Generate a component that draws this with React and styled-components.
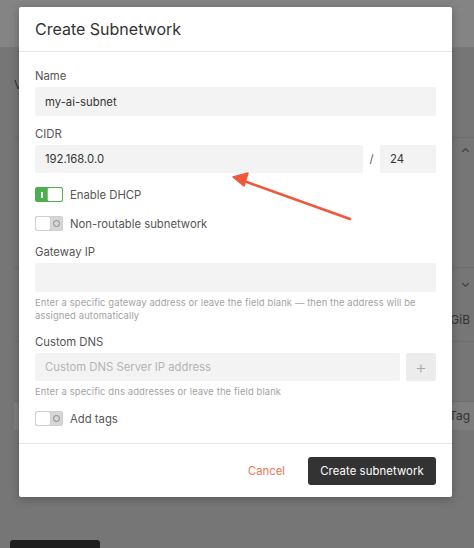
import React from "react";
import styled, { createGlobalStyle } from "styled-components";

const Global = createGlobalStyle`
  html, body { margin: 0; padding: 0; }
  body {
    width: 474px; height: 548px; overflow: hidden;
    background: #767676;
    font-family: Inter, "Noto Sans", "Liberation Sans", sans-serif;
  }
  * { box-sizing: border-box; }
`;

/* ---------- background page (behind the dim overlay) ---------- */
const Page = styled.div`
  position: relative;
  width: 474px;
  height: 548px;
  background: #767676;
  display: flex;
  flex-direction: column;
`;
const PageTop = styled.div`
  height: 48px;
  background: #848484;
  border-bottom: 1px solid #7a7a7a;
`;
const PageBody = styled.div`
  flex: 1;
  display: flex;
  flex-direction: column;
  padding: 28px 0 0 14px;
  color: #3a3a3a;
  font-size: 12px;
`;
const PageRow = styled.div`
  height: ${(p) => p.h}px;
  flex: none;
  display: flex;
  align-items: center;
  justify-content: space-between;
  background: ${(p) => (p.band ? "#7e7e7e" : "transparent")};
  border-bottom: 1px solid ${(p) => (p.line ? "#6f6f6f" : "transparent")};
  padding-right: 4px;
  font-size: 12px;
  color: #333;
`;
const PageButton = styled.div`
  margin-top: auto;
  margin-left: -4px;
  width: 90px;
  height: 8px;
  background: #1f1f1f;
  border-radius: 3px 3px 0 0;
`;

/* ---------- dialog ---------- */
const Backdrop = styled.div`
  position: absolute;
  inset: 0;
  padding: 7px 22px 0 19px;
`;
const Modal = styled.div`
  width: 433px;
  height: 490px;
  background: #fff;
  border-radius: 2px;
  box-shadow: 0 2px 10px rgba(0, 0, 0, 0.25);
  display: flex;
  flex-direction: column;
  position: relative;
`;
const Header = styled.div`
  height: 45px;
  flex: none;
  padding: 0 16px;
  display: flex;
  align-items: center;
  border-bottom: 1px solid #e6e6e6;
`;
const Title = styled.h2`
  margin: 0;
  font-size: 16px;
  font-weight: 400;
  color: #333;
`;
const Body = styled.div`
  flex: 1;
  padding: 16px 16px 0 16px;
  display: flex;
  flex-direction: column;
`;
const Field = styled.div`
  display: flex;
  flex-direction: column;
  margin-top: ${(p) => p.mt || 0}px;
`;
const Label = styled.label`
  font-size: 11.3px;
  line-height: 16px;
  color: #555;
  margin-bottom: 3px;
`;
const Input = styled.div`
  height: ${(p) => p.h || 29}px;
  flex: ${(p) => (p.grow ? "1 1 0" : "none")};
  width: ${(p) => (p.w ? `${p.w}px` : "auto")};
  background: #f4f3f3;
  border-radius: 2px;
  display: flex;
  align-items: center;
  padding-left: 10px;
  font-size: 11.3px;
  color: ${(p) => (p.placeholder ? "#b4b4b4" : "#333")};
`;
const InputRow = styled.div`
  display: flex;
  align-items: center;
  gap: ${(p) => p.gap || 0}px;
`;
const Slash = styled.span`
  width: 17px;
  text-align: center;
  font-size: 11.3px;
  color: #555;
`;
const PlusButton = styled.div`
  width: 30px;
  height: 28px;
  background: #ececec;
  border-radius: 2px;
  display: flex;
  align-items: center;
  justify-content: center;
  color: #aaa;
  font-size: 18px;
  font-weight: 300;
`;
const Help = styled.div`
  margin-top: 4px;
  font-size: 9.45px;
  line-height: 13px;
  color: #a3a3a3;
  letter-spacing: 0.1px;
`;
const ToggleRow = styled.div`
  display: flex;
  align-items: center;
  gap: 7px;
  margin-top: ${(p) => p.mt || 0}px;
  font-size: 11.3px;
  color: #555;
`;
const Track = styled.div`
  width: 28px;
  height: 15px;
  border-radius: 2px;
  display: flex;
  flex-direction: ${(p) => (p.on ? "row" : "row-reverse")};
  background: ${(p) => (p.on ? "#4cae4f" : "#d6d6d6")};
  border: 1px solid ${(p) => (p.on ? "#4cae4f" : "#d0d0d0")};
  overflow: hidden;
`;
const TrackMark = styled.div`
  flex: 1;
  display: flex;
  align-items: center;
  justify-content: center;
`;
const OnMark = styled.div`
  width: 1.5px;
  height: 6px;
  background: #fff;
`;
const OffMark = styled.div`
  width: 7px;
  height: 7px;
  border: 1.2px solid #888;
  border-radius: 50%;
`;
const Knob = styled.div`
  width: 14px;
  height: 100%;
  background: #fff;
  border-radius: 2px;
  box-shadow: 0 0 0 0.5px #ccc;
`;
const Footer = styled.div`
  height: 54px;
  flex: none;
  border-top: 1px solid #e6e6e6;
  padding: 0 16px;
  display: flex;
  align-items: center;
  justify-content: flex-end;
  gap: 23px;
`;
const TextButton = styled.button`
  border: none;
  background: none;
  padding: 0;
  font: inherit;
  font-size: 11.3px;
  color: #e9775a;
`;
const PrimaryButton = styled.button`
  border: none;
  width: 128px;
  height: 28px;
  border-radius: 3px;
  background: #333;
  color: #fff;
  font: inherit;
  font-size: 11.3px;
  letter-spacing: 0.1px;
`;
const ArrowSvg = styled.svg`
  position: absolute;
  left: 0;
  top: 0;
  pointer-events: none;
`;

function Toggle({ on }) {
  return (
    <Track on={on ? 1 : 0}>
      <TrackMark>{on ? <OnMark /> : <OffMark />}</TrackMark>
      <Knob />
    </Track>
  );
}

export default function App() {
  return (
    <>
      <Global />
      <Page>
        <PageTop />
        <PageBody>
          <PageRow h={18}>V</PageRow>
          <PageRow h={44} line />
          <PageRow h={30}><span /><span>⌃</span></PageRow>
          <PageRow h={100} line />
          <PageRow h={30}><span /><span>⌄</span></PageRow>
          <PageRow h={44} line><span /><span>GiB</span></PageRow>
          <PageRow h={60} line />
          <PageRow h={28} band><span /><span>Tag</span></PageRow>
          <PageButton />
        </PageBody>
        <Backdrop>
          <Modal>
            <Header>
              <Title>Create Subnetwork</Title>
            </Header>
            <Body>
              <Field>
                <Label>Name</Label>
                <Input>my-ai-subnet</Input>
              </Field>
              <Field mt={10}>
                <Label>CIDR</Label>
                <InputRow>
                  <Input grow h={28}>192.168.0.0</Input>
                  <Slash>/</Slash>
                  <Input h={28} w={56}>24</Input>
                </InputRow>
              </Field>
              <ToggleRow mt={14}>
                <Toggle on />
                Enable DHCP
              </ToggleRow>
              <ToggleRow mt={14}>
                <Toggle />
                Non-routable subnetwork
              </ToggleRow>
              <Field mt={13}>
                <Label>Gateway IP</Label>
                <Input />
                <Help>
                  Enter a specific gateway address or leave the field blank — then the address will be
                  assigned automatically
                </Help>
              </Field>
              <Field mt={12}>
                <Label>Custom DNS</Label>
                <InputRow gap={6}>
                  <Input grow h={28} placeholder>Custom DNS Server IP address</Input>
                  <PlusButton>+</PlusButton>
                </InputRow>
                <Help>Enter a specific dns addresses or leave the field blank</Help>
              </Field>
              <ToggleRow mt={13}>
                <Toggle />
                Add tags
              </ToggleRow>
            </Body>
            <Footer>
              <TextButton>Cancel</TextButton>
              <PrimaryButton>Create subnetwork</PrimaryButton>
            </Footer>
          </Modal>
        </Backdrop>
        <ArrowSvg width="474" height="548" viewBox="0 0 474 548">
          <line x1="350" y1="219" x2="244" y2="181" stroke="#f1583b" strokeWidth="2.6" strokeLinecap="round" />
          <polygon points="233,177 248,173 244,186" fill="#f1583b" stroke="#f1583b" strokeWidth="1.5" strokeLinejoin="round" />
        </ArrowSvg>
      </Page>
    </>
  );
}
